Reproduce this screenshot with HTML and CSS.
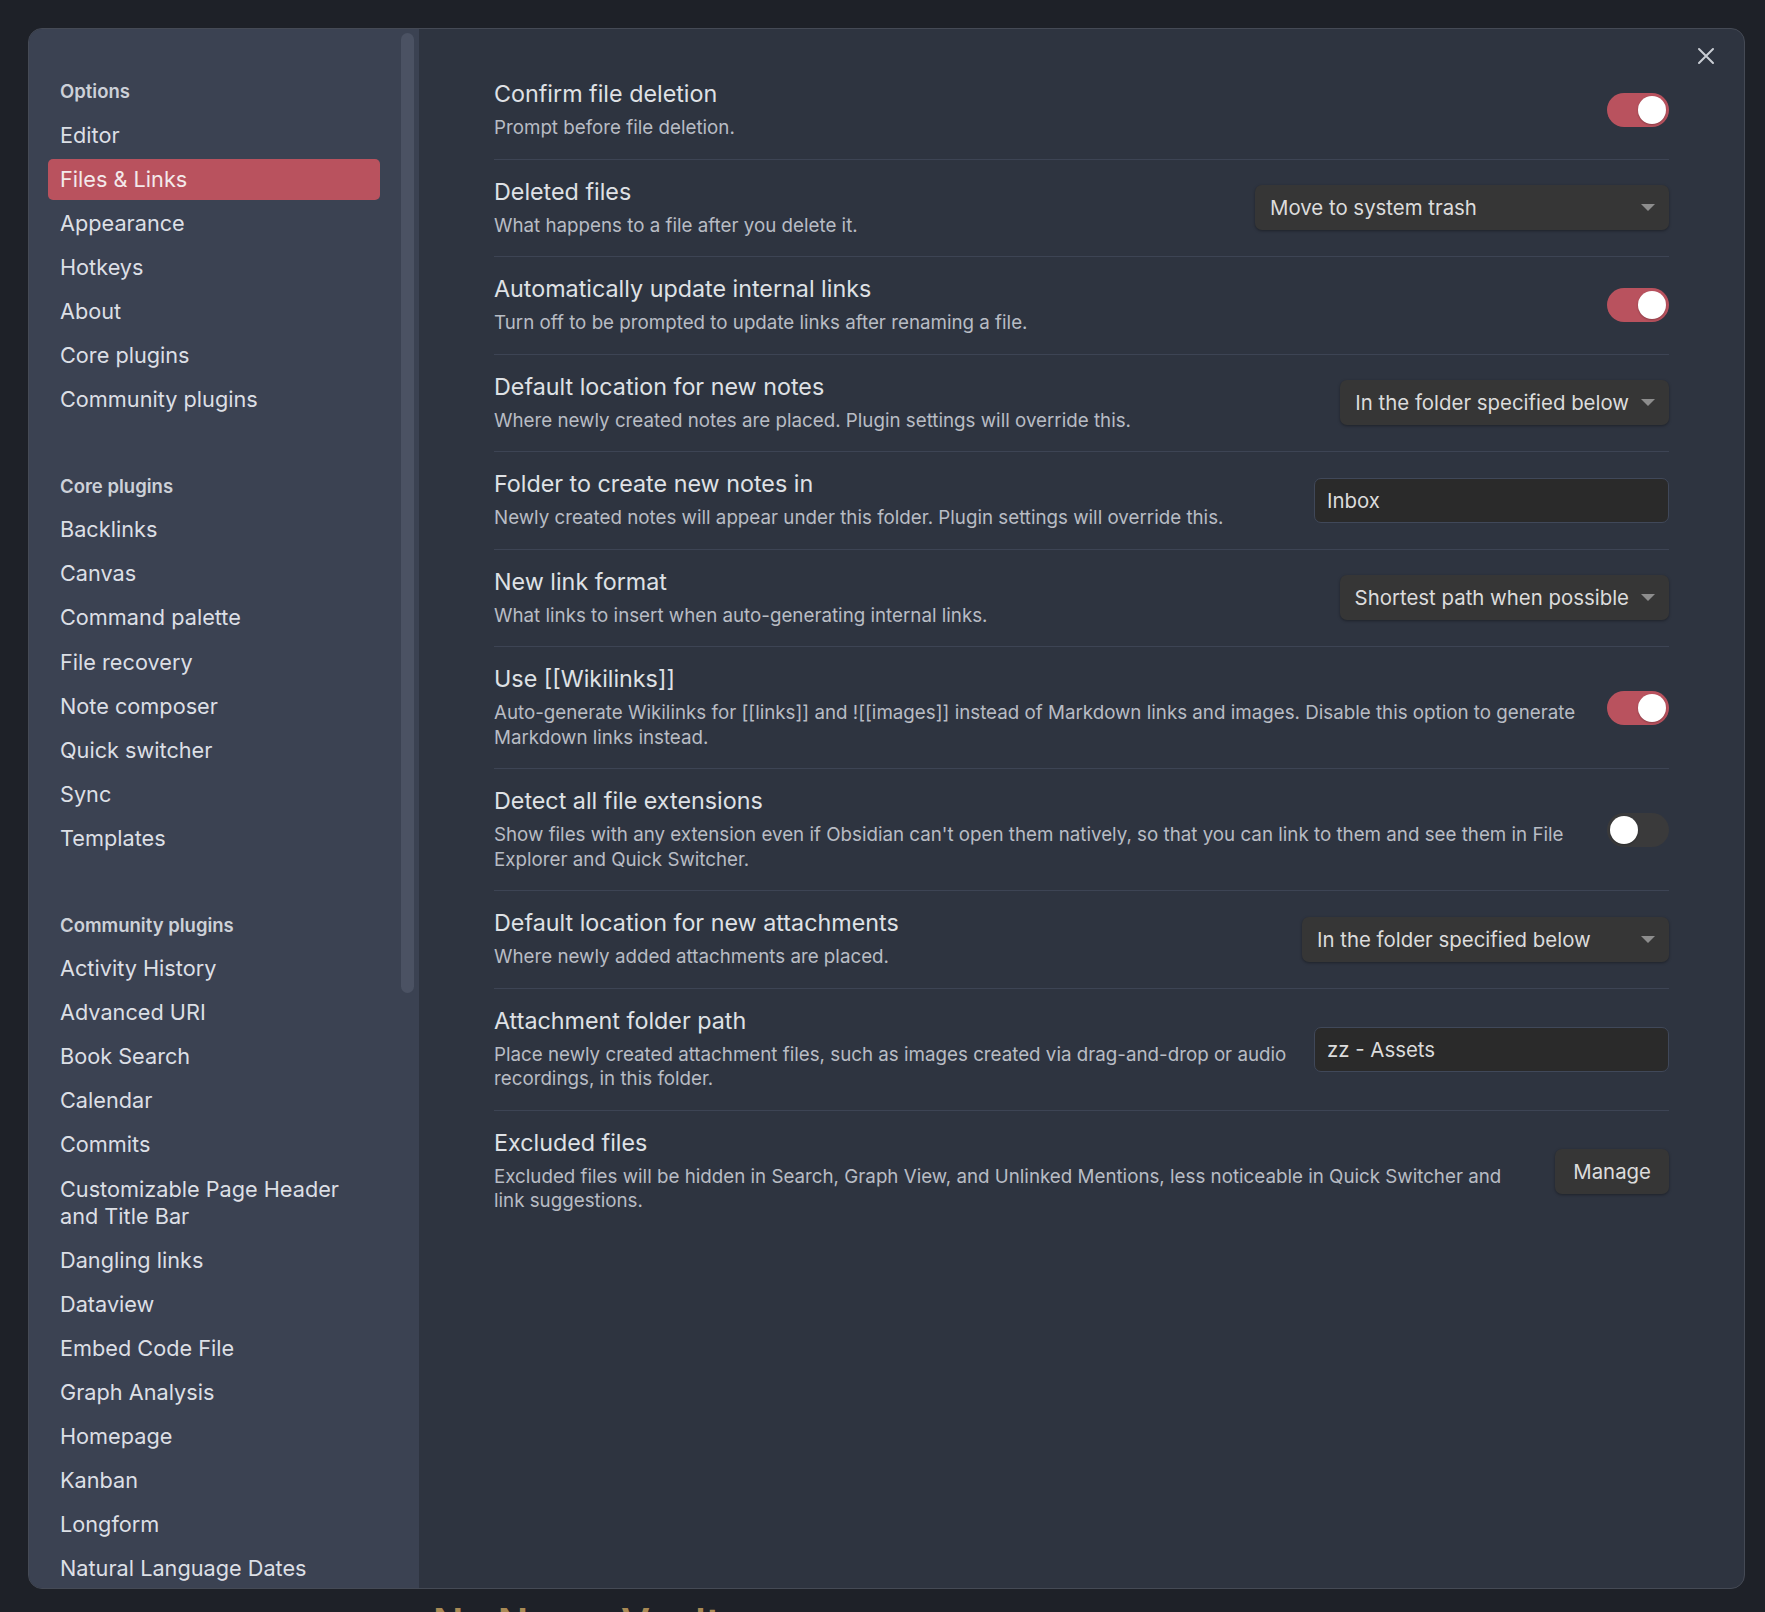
FILE: index.html
```html
<!DOCTYPE html>
<html lang="en">
<head>
    <meta charset="UTF-8">
    <meta name="viewport" content="width=device-width, initial-scale=1.0">
    <title>Settings - Files &amp; Links</title>
    <link rel="stylesheet" href="styles.css">
</head>
<body>
    <div class="modal">
        <div class="sidebar">
            <nav class="nav">
                <div class="nav-section">
                    <div class="nav-heading">Options</div>
                    <div class="nav-item">Editor</div>
                    <div class="nav-item is-active">Files &amp; Links</div>
                    <div class="nav-item">Appearance</div>
                    <div class="nav-item">Hotkeys</div>
                    <div class="nav-item">About</div>
                    <div class="nav-item">Core plugins</div>
                    <div class="nav-item">Community plugins</div>
                </div>
                <div class="nav-section">
                    <div class="nav-heading">Core plugins</div>
                    <div class="nav-item">Backlinks</div>
                    <div class="nav-item">Canvas</div>
                    <div class="nav-item">Command palette</div>
                    <div class="nav-item">File recovery</div>
                    <div class="nav-item">Note composer</div>
                    <div class="nav-item">Quick switcher</div>
                    <div class="nav-item">Sync</div>
                    <div class="nav-item">Templates</div>
                </div>
                <div class="nav-section">
                    <div class="nav-heading">Community plugins</div>
                    <div class="nav-item">Activity History</div>
                    <div class="nav-item">Advanced URI</div>
                    <div class="nav-item">Book Search</div>
                    <div class="nav-item">Calendar</div>
                    <div class="nav-item">Commits</div>
                    <div class="nav-item">Customizable Page Header and Title Bar</div>
                    <div class="nav-item">Dangling links</div>
                    <div class="nav-item">Dataview</div>
                    <div class="nav-item">Embed Code File</div>
                    <div class="nav-item">Graph Analysis</div>
                    <div class="nav-item">Homepage</div>
                    <div class="nav-item">Kanban</div>
                    <div class="nav-item">Longform</div>
                    <div class="nav-item">Natural Language Dates</div>
                </div>
            </nav>
            <div class="scroll-track"><div class="scroll-thumb"></div></div>
        </div>

        <div class="content">
            <div class="setting">
                <div class="setting-info">
                    <div class="setting-name">Confirm file deletion</div>
                    <div class="setting-desc">Prompt before file deletion.</div>
                </div>
                <div class="toggle is-on"><span class="knob"></span></div>
            </div>
            <div class="setting">
                <div class="setting-info">
                    <div class="setting-name">Deleted files</div>
                    <div class="setting-desc">What happens to a file after you delete it.</div>
                </div>
                <div class="dropdown w-trash"><span>Move to system trash</span><span class="caret"></span></div>
            </div>
            <div class="setting">
                <div class="setting-info">
                    <div class="setting-name">Automatically update internal links</div>
                    <div class="setting-desc">Turn off to be prompted to update links after renaming a file.</div>
                </div>
                <div class="toggle is-on"><span class="knob"></span></div>
            </div>
            <div class="setting">
                <div class="setting-info">
                    <div class="setting-name">Default location for new notes</div>
                    <div class="setting-desc">Where newly created notes are placed. Plugin settings will override this.</div>
                </div>
                <div class="dropdown"><span>In the folder specified below</span><span class="caret"></span></div>
            </div>
            <div class="setting">
                <div class="setting-info">
                    <div class="setting-name">Folder to create new notes in</div>
                    <div class="setting-desc">Newly created notes will appear under this folder. Plugin settings will override this.</div>
                </div>
                <div class="text-input">Inbox</div>
            </div>
            <div class="setting">
                <div class="setting-info">
                    <div class="setting-name">New link format</div>
                    <div class="setting-desc">What links to insert when auto-generating internal links.</div>
                </div>
                <div class="dropdown"><span>Shortest path when possible</span><span class="caret"></span></div>
            </div>
            <div class="setting">
                <div class="setting-info">
                    <div class="setting-name">Use [[Wikilinks]]</div>
                    <div class="setting-desc">Auto-generate Wikilinks for [[links]] and ![[images]] instead of Markdown links and images. Disable this option to generate Markdown links instead.</div>
                </div>
                <div class="toggle is-on"><span class="knob"></span></div>
            </div>
            <div class="setting">
                <div class="setting-info">
                    <div class="setting-name">Detect all file extensions</div>
                    <div class="setting-desc">Show files with any extension even if Obsidian can't open them natively, so that you can link to them and see them in File Explorer and Quick Switcher.</div>
                </div>
                <div class="toggle"><span class="knob"></span></div>
            </div>
            <div class="setting">
                <div class="setting-info">
                    <div class="setting-name">Default location for new attachments</div>
                    <div class="setting-desc">Where newly added attachments are placed.</div>
                </div>
                <div class="dropdown w-attach"><span>In the folder specified below</span><span class="caret"></span></div>
            </div>
            <div class="setting">
                <div class="setting-info">
                    <div class="setting-name">Attachment folder path</div>
                    <div class="setting-desc">Place newly created attachment files, such as images created via drag-and-drop or audio recordings, in this folder.</div>
                </div>
                <div class="text-input">zz - Assets</div>
            </div>
            <div class="setting">
                <div class="setting-info">
                    <div class="setting-name">Excluded files</div>
                    <div class="setting-desc">Excluded files will be hidden in Search, Graph View, and Unlinked Mentions, less noticeable in Quick Switcher and link suggestions.</div>
                </div>
                <div class="button">Manage</div>
            </div>
        </div>

        <div class="close">
            <svg width="20" height="20" viewBox="0 0 20 20" fill="none" stroke="currentColor" stroke-width="2" stroke-linecap="round">
                <path d="M3 3 L17 17 M17 3 L3 17"/>
            </svg>
        </div>
    </div>
    <div class="vault-name">No Name Vault</div>
</body>
</html>
```

FILE: styles.css
```css
*, *::before, *::after {
    box-sizing: border-box;
}
html, body {
    height: 100%;
}
body {
    margin: 0;
    padding: 28px 20px 0 28px;
    background: #1e2128;
    font-family: Inter, "Noto Sans", sans-serif;
    color: #dadde3;
    overflow: hidden;
}

.modal {
    position: relative;
    display: flex;
    height: 1561px;
    background: #2e3440;
    border: 1px solid #454a55;
    border-radius: 14px;
    overflow: hidden;
}

/* sidebar */
.sidebar {
    display: flex;
    width: 390px;
    flex: none;
    background: #3b4252;
}
.nav {
    flex: 1;
    padding: 50px 21px 0 19px;
    overflow: hidden;
}
.nav-section + .nav-section {
    margin-top: 53.7px;
}
.nav-heading {
    padding: 0 12px;
    margin-bottom: 11.5px;
    font-size: 18.5px;
    line-height: 24px;
    font-weight: 600;
    color: #cdd1d8;
}
.nav-item {
    padding: 7px 12px;
    margin-bottom: 3.1px;
    font-size: 21.7px;
    line-height: 27px;
    color: #dcdfe5;
    border-radius: 5px;
}
.nav-item.is-active {
    background: #b9525e;
    color: #f3e9ea;
}
.scroll-track {
    width: 18px;
    flex: none;
    padding-top: 4px;
}
.scroll-thumb {
    width: 13px;
    height: 960px;
    border-radius: 7px;
    background: #4b5263;
}

/* settings */
.content {
    flex: 1;
    padding: 33px 75px 0 75px;
}
.setting {
    display: flex;
    align-items: center;
    padding: 18px 0 18px;
}
.setting + .setting {
    border-top: 1px solid #3d4454;
}
.setting-info {
    flex: 1;
    margin-right: 26px;
}
.setting-name {
    font-size: 23.3px;
    line-height: 28px;
    color: #dfe1e5;
}
.setting-desc {
    margin-top: 8px;
    font-size: 18.75px;
    line-height: 24.5px;
    color: #b8bcc4;
}

.toggle {
    flex: none;
    display: flex;
    align-items: center;
    width: 62px;
    height: 34px;
    padding: 0 3px;
    border-radius: 17px;
    background: #3a3a3b;
}
.toggle.is-on {
    justify-content: flex-end;
    background: #b9525e;
}
.knob {
    width: 28px;
    height: 28px;
    border-radius: 50%;
    background: #ffffff;
    box-shadow: 0 1px 2px rgba(0, 0, 0, 0.25);
}

.dropdown {
    flex: none;
    display: flex;
    align-items: center;
    justify-content: space-between;
    height: 45px;
    padding: 0 14px 0 15px;
    gap: 12px;
    font-size: 20.4px;
    color: #dcdcdc;
    background: #363636;
    border-radius: 7px;
    box-shadow: 0 1px 3px rgba(0, 0, 0, 0.35);
}
.dropdown.w-trash {
    width: 414px;
}
.dropdown.w-attach {
    width: 367px;
}
.caret {
    width: 0;
    height: 0;
    border-left: 7px solid transparent;
    border-right: 7px solid transparent;
    border-top: 7px solid #8d8d8d;
}

.text-input {
    flex: none;
    width: 355px;
    height: 45px;
    padding: 0 12px;
    display: flex;
    align-items: center;
    font-size: 20.4px;
    color: #dcdcdc;
    background: #2a2a2a;
    border: 1px solid #404859;
    border-radius: 7px;
}

.button {
    flex: none;
    height: 45px;
    padding: 0 18px;
    display: flex;
    align-items: center;
    font-size: 20.4px;
    color: #dcdcdc;
    background: #363636;
    border-radius: 7px;
    box-shadow: 0 1px 3px rgba(0, 0, 0, 0.35);
}

.close {
    position: absolute;
    top: 17px;
    right: 28px;
    color: #c9cdd4;
}

.vault-name {
    margin: 9px 0 0 405px;
    font-size: 40px;
    font-weight: 600;
    color: #a98a55;
}
```
